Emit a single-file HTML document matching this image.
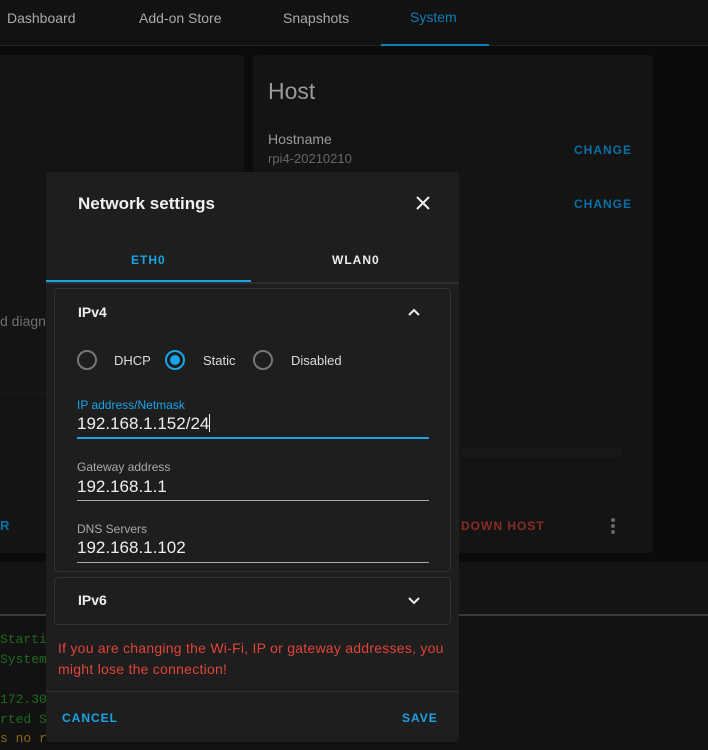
<!DOCTYPE html>
<html><head><style>
*{margin:0;padding:0;box-sizing:border-box}
body{width:708px;height:750px;overflow:hidden;background:#0b0b0b;font-family:"Liberation Sans",sans-serif;position:relative;color:#ddd}
.a{position:absolute}
.t{white-space:nowrap}
</style></head><body>
<!-- top bar -->
<div class="a" style="left:0;top:0;width:708px;height:46px;background:#121212;border-bottom:1px solid #222"></div>
<div class="a t" style="left:7px;top:10px;font-size:14px;color:#aaa">Dashboard</div>
<div class="a t" style="left:139px;top:10px;font-size:14px;color:#aaa">Add-on Store</div>
<div class="a t" style="left:283px;top:10px;font-size:14px;color:#aaa">Snapshots</div>
<div class="a t" style="left:410px;top:9px;font-size:14px;color:#0f7fb8">System</div>
<div class="a" style="left:381px;top:44px;width:108px;height:2px;background:#0f7fb8"></div>
<!-- left card -->
<div class="a" style="left:0;top:55px;width:244px;height:498px;background:#141414;border-radius:0 4px 4px 0"></div>
<div class="a" style="left:0;top:393px;width:244px;height:1px;background:#1c1c1c"></div>
<div class="a t" style="left:0;top:313px;font-size:14px;color:#6e6e6e">d diagno</div>
<div class="a t" style="left:0;top:518px;font-size:13px;color:#0b6fa6;font-weight:bold">R</div>
<!-- host card -->
<div class="a" style="left:253px;top:55px;width:400px;height:498px;background:#141414;border-radius:4px"></div>
<div class="a t" style="left:268px;top:78px;font-size:23px;color:#9a9a9a">Host</div>
<div class="a t" style="left:268px;top:131px;font-size:14px;color:#9a9a9a">Hostname</div>
<div class="a t" style="left:268px;top:151px;font-size:13px;color:#666">rpi4-20210210</div>
<div class="a t" style="left:574px;top:143px;font-size:12px;color:#0b6fa6;font-weight:bold;letter-spacing:1px">CHANGE</div>
<div class="a t" style="left:574px;top:197px;font-size:12px;color:#0b6fa6;font-weight:bold;letter-spacing:1px">CHANGE</div>
<div class="a" style="left:460px;top:447px;width:162px;height:11px;background:#181818;border-radius:5px"></div>
<div class="a t" style="left:461px;top:519px;font-size:12px;color:#8a2c26;font-weight:bold;letter-spacing:1px">DOWN HOST</div>
<div class="a" style="left:611px;top:518px;width:4px;height:4px;border-radius:2px;background:#666;box-shadow:0 6px 0 #666,0 12px 0 #666"></div>
<!-- lower section -->
<div class="a" style="left:0;top:562px;width:708px;height:52px;background:#141414"></div>
<div class="a" style="left:0;top:614px;width:708px;height:2px;background:#3a3a3a"></div>
<div class="a" style="left:0;top:616px;width:708px;height:134px;background:#121212"></div>
<div class="a t" style="font-family:'Liberation Mono',monospace;font-size:13px;left:0;top:630px;color:#1d6b1d;line-height:20px">Starti<br>System<br><br>172.30<br>rted S</div>
<div class="a t" style="font-family:'Liberation Mono',monospace;font-size:13px;left:0;top:731px;color:#8a6a10">s no r</div>
<!-- dialog -->
<div class="a" style="left:46px;top:172px;width:413px;height:570px;background:#1e1e1e;border-radius:4px"></div>
<div class="a t" style="left:78px;top:194px;font-size:17px;color:#f0f0f0;font-weight:bold">Network settings</div>
<svg class="a" style="left:415px;top:195px" width="16" height="16"><path d="M2 2L14 14M14 2L2 14" stroke="#eee" stroke-width="2"/></svg>
<div class="a t" style="left:131px;top:253px;font-size:12px;color:#1aa3e8;font-weight:bold;letter-spacing:1px">ETH0</div>
<div class="a t" style="left:332px;top:253px;font-size:12px;color:#eee;font-weight:bold;letter-spacing:1px">WLAN0</div>
<div class="a" style="left:46px;top:282px;width:413px;height:2px;background:#2c2c2c"></div>
<div class="a" style="left:46px;top:280px;width:205px;height:2px;background:#1aa3e8"></div>
<!-- ipv4 panel -->
<div class="a" style="left:54px;top:288px;width:397px;height:284px;border:1px solid #333;border-radius:4px"></div>
<div class="a t" style="left:78px;top:304px;font-size:14px;color:#eee;font-weight:bold">IPv4</div>
<svg class="a" style="left:406px;top:305px" width="16" height="14"><path d="M3 10L8 5L13 10" stroke="#eee" stroke-width="2" fill="none"/></svg>
<div class="a" style="left:77px;top:350px;width:20px;height:20px;border:2px solid #777;border-radius:50%"></div>
<div class="a t" style="left:114px;top:353px;font-size:13px;color:#ddd">DHCP</div>
<div class="a" style="left:165px;top:350px;width:20px;height:20px;border:2px solid #1aa3e8;border-radius:50%"></div>
<div class="a" style="left:170px;top:355px;width:10px;height:10px;background:#1aa3e8;border-radius:50%"></div>
<div class="a t" style="left:203px;top:353px;font-size:13px;color:#ddd">Static</div>
<div class="a" style="left:253px;top:350px;width:20px;height:20px;border:2px solid #777;border-radius:50%"></div>
<div class="a t" style="left:291px;top:353px;font-size:13px;color:#ddd">Disabled</div>
<div class="a t" style="left:77px;top:398px;font-size:12px;color:#1aa3e8">IP address/Netmask</div>
<div class="a t" style="left:77px;top:414px;font-size:17px;color:#eee">192.168.1.152/24<span style="display:inline-block;width:1px;height:18px;background:#eee;vertical-align:-3px"></span></div>
<div class="a" style="left:77px;top:437px;width:352px;height:2px;background:#1aa3e8"></div>
<div class="a t" style="left:77px;top:460px;font-size:12px;color:#aaa">Gateway address</div>
<div class="a t" style="left:77px;top:477px;font-size:17px;color:#eee">192.168.1.1</div>
<div class="a" style="left:77px;top:500px;width:352px;height:1px;background:#aaa"></div>
<div class="a t" style="left:77px;top:522px;font-size:12px;color:#aaa">DNS Servers</div>
<div class="a t" style="left:77px;top:538px;font-size:17px;color:#eee">192.168.1.102</div>
<div class="a" style="left:77px;top:562px;width:352px;height:1px;background:#aaa"></div>
<!-- ipv6 -->
<div class="a" style="left:54px;top:577px;width:397px;height:48px;border:1px solid #333;border-radius:4px"></div>
<div class="a t" style="left:78px;top:592px;font-size:14px;color:#eee;font-weight:bold">IPv6</div>
<svg class="a" style="left:406px;top:594px" width="16" height="14"><path d="M3 4L8 9L13 4" stroke="#eee" stroke-width="2" fill="none"/></svg>
<div class="a" style="left:58px;top:638px;width:395px;font-size:14px;line-height:21px;color:#e0443a;letter-spacing:0.25px">If you are changing the Wi-Fi, IP or gateway addresses, you might lose the connection!</div>
<div class="a" style="left:46px;top:691px;width:413px;height:1px;background:#333"></div>
<div class="a t" style="left:62px;top:711px;font-size:12px;color:#1aa3e8;font-weight:bold;letter-spacing:1px">CANCEL</div>
<div class="a t" style="left:402px;top:711px;font-size:12px;color:#1aa3e8;font-weight:bold;letter-spacing:1px">SAVE</div>
</body></html>
